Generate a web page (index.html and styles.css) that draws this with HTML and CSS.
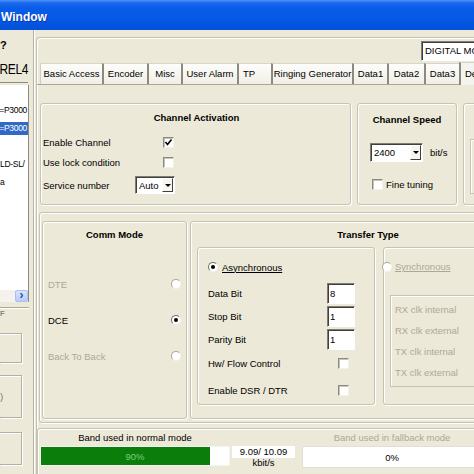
FILE: index.html
```html
<!DOCTYPE html>
<html lang="en">
<head>
  <meta charset="UTF-8">
  <title>Window</title>
  <link rel="stylesheet" href="styles.css">
</head>
<body>
  <div class="titlebar"><span class="title">Window</span></div>

  <div class="app">
    <div class="sidebar">
      <div class="sb-head">
        <div class="sb-icon">?</div>
        <div class="sb-name">REL4</div>
      </div>
      <div class="sb-list">
        <div class="node"><span>=P3000</span></div>
        <div class="node sel"><span>=P3000</span></div>
        <div class="node"></div>
        <div class="node start"><span>LD-SL/</span></div>
        <div class="node start"><span>a</span></div>
      </div>
      <div class="sb-scroll"><div class="scroll-btn">›</div></div>
      <div class="sb-foot">
        <div class="sb-note">F</div>
        <div class="sb-btn b1"></div>
        <div class="sb-btn b2">)</div>
        <div class="sb-btn b3"></div>
      </div>
    </div>

    <div class="split"></div>

    <div class="main">
      <div class="main-top">
        <div class="field digital">DIGITAL MO</div>
      </div>

      <div class="tabs">
        <div class="tab w62">Basic Access</div>
        <div class="tab w45">Encoder</div>
        <div class="tab w34">Misc</div>
        <div class="tab w56">User Alarm</div>
        <div class="tab w34 tp">TP</div>
        <div class="tab w81">Ringing Generator</div>
        <div class="tab w35">Data1</div>
        <div class="tab w37">Data2</div>
        <div class="tab w35">Data3</div>
        <div class="tab active">De</div>
      </div>

      <div class="page">
        <div class="row1">
          <div class="grp activation">
            <div class="gtitle">Channel Activation</div>
            <div class="frow first">
              <span class="lbl w120">Enable Channel</span>
              <span class="chk"><svg width="9" height="9" viewBox="0 0 9 9"><polyline points="1.5,4 3.5,6.5 7.5,1.5" fill="none" stroke="#000" stroke-width="1.6"/></svg></span>
            </div>
            <div class="frow">
              <span class="lbl w120">Use lock condition</span>
              <span class="chk"></span>
            </div>
            <div class="frow svc">
              <span class="lbl w92">Service number</span>
              <div class="combo auto"><span class="val">Auto</span><span class="drop"></span></div>
            </div>
          </div>

          <div class="grp speed">
            <div class="gtitle">Channel Speed</div>
            <div class="speed-row">
              <div class="combo rate"><span class="val">2400</span><span class="drop"></span></div>
              <span class="unit">bit/s</span>
            </div>
            <div class="tune-row">
              <span class="chk"></span>
              <span>Fine tuning</span>
            </div>
          </div>

          <div class="grp third">
            <div class="inner"></div>
          </div>
        </div>

        <div class="grp row2">
          <div class="grp comm">
            <div class="gtitle">Comm Mode</div>
            <div class="opt first dis"><span>DTE</span><span class="radio"></span></div>
            <div class="opt"><span>DCE</span><span class="radio on"></span></div>
            <div class="opt dis"><span>Back To Back</span><span class="radio"></span></div>
          </div>

          <div class="grp transfer">
            <div class="gtitle">Transfer Type</div>
            <div class="tt-body">
              <div class="grp async">
                <div class="mode"><span class="radio on"></span><u>Asynchronous</u></div>
                <div class="nrow first"><span class="lbl w119">Data Bit</span><span class="field num">8</span></div>
                <div class="nrow"><span class="lbl w119">Stop Bit</span><span class="field num">1</span></div>
                <div class="nrow"><span class="lbl w119">Parity Bit</span><span class="field num">1</span></div>
                <div class="crow hw"><span class="lbl w130">Hw/ Flow Control</span><span class="chk"></span></div>
                <div class="crow dsr"><span class="lbl w130">Enable DSR / DTR</span><span class="chk"></span></div>
              </div>
              <div class="grp sync">
                <div class="mode dis"><span class="radio"></span><u>Synchronous</u></div>
                <div class="sync-box">
                  <div>RX clk internal</div>
                  <div>RX clk external</div>
                  <div>TX clk internal</div>
                  <div>TX clk external</div>
                </div>
              </div>
            </div>
          </div>
        </div>
      </div>

      <div class="band">
        <div class="band-normal">
          <div class="band-lbl">Band used in normal mode</div>
          <div class="bar">
            <div class="fill" style="width: 90%"></div>
            <div class="pct">90%</div>
          </div>
        </div>
        <div class="band-rate">
          <div class="rate-val">9.09/ 10.09</div>
          <div class="rate-unit">kbit/s</div>
        </div>
        <div class="band-fallback">
          <div class="band-lbl dis">Band used in fallback mode</div>
          <div class="fb-box">0%</div>
        </div>
      </div>
    </div>
  </div>
</body>
</html>
```

FILE: styles.css
```css
* {
  margin: 0;
  padding: 0;
  box-sizing: border-box;
}

body {
  width: 474px;
  height: 474px;
  overflow: hidden;
  background: #ece9d8;
  font-family: "Liberation Sans", Arial, sans-serif;
  font-size: 9.5px;
  color: #000;
}

/* title bar */
.titlebar {
  height: 30px;
  display: flex;
  align-items: center;
  background: linear-gradient(#4a94f6 0, #1a68ee 3px, #0a5de8 8px, #0558e4 20px, #034fd8 30px);
}

.title {
  color: #fff;
  font-weight: bold;
  font-size: 12px;
  padding: 3px 0 0 1px;
  text-shadow: 1px 1px 0 #0b3aa8;
}

.app {
  display: flex;
  height: 444px;
  overflow: hidden;
}

/* left tree panel */
.sidebar {
  width: 29px;
  flex-shrink: 0;
  display: flex;
  flex-direction: column;
}

.sb-head {
  height: 53px;
  margin-right: 1px;
  padding-top: 9px;
  border-bottom: 1px solid #8f8d80;
}

.sb-icon {
  font-weight: bold;
  font-size: 11px;
  line-height: 12px;
}

.sb-name {
  display: flex;
  justify-content: flex-end;
  white-space: nowrap;
  font-size: 12px;
  letter-spacing: -0.4px;
  line-height: 18px;
  margin-top: 9px;
  transform: scaleY(1.25);
}

.sb-list {
  height: 205px;
  margin-top: 2px;
  background: #fff;
  border-right: 1px solid #8d8c84;
  padding-top: 16px;
  overflow: hidden;
}

.node {
  height: 18px;
  display: flex;
  align-items: center;
  justify-content: flex-end;
  overflow: hidden;
  white-space: nowrap;
  font-size: 8.5px;
  letter-spacing: -0.3px;
}

.node span {
  line-height: 13px;
  padding-right: 1px;
}

.node.sel span {
  background: #316ac5;
  color: #fff;
}

.node.start {
  justify-content: flex-start;
}

.sb-scroll {
  height: 12px;
  display: flex;
  background: #f3f2ec;
  border-right: 1px solid #8d8c84;
}

.scroll-btn {
  width: 13px;
  margin-left: auto;
  background: linear-gradient(#d9e4fd, #b7cbf7);
  border: 1px solid #aac0f0;
  border-radius: 2px;
  color: #2b4c9c;
  font-weight: bold;
  font-size: 12px;
  line-height: 8px;
  text-align: center;
}

.sb-foot {
  margin-top: 5px;
  border-top: 1px solid #aca899;
  box-shadow: inset 0 1px 0 #fff;
  padding-top: 1px;
}

.sb-note {
  font-size: 8px;
  line-height: 10px;
  color: #555;
}

.sb-btn {
  width: 22px;
  border: 1px solid #b2b0a2;
  border-left: none;
  box-shadow: inset 0 1px 0 #fff, 1px 1px 0 #fff;
}

.b1 { height: 30px; margin-top: 14px; }
.b2 { height: 43px; margin-top: 12px; display: flex; align-items: center; color: #777; }
.b3 { height: 33px; margin-top: 14px; }

.split {
  width: 7px;
  flex-shrink: 0;
  background: linear-gradient(to right, transparent 4px, #b5b3a5 4px, #b5b3a5 5px, #fff 5px, #fff 6px, transparent 6px);
}

/* main frame */
.main {
  width: 438px;
  flex-shrink: 0;
  margin-top: 7px;
  border-left: 1px solid #c3c0ae;
  border-top: 1px solid #c3c0ae;
  border-top-left-radius: 4px;
  box-shadow: inset 1px 1px 0 #fff;
  display: flex;
  flex-direction: column;
}

.main-top {
  height: 24px;
  display: flex;
  align-items: flex-end;
  padding-bottom: 1px;
}

.field {
  background: #fff;
  border: 1px solid;
  border-color: #7f7d70 #fff #fff #7f7d70;
  box-shadow: inset 1px 1px 0 #3f3f3f;
}

.digital {
  margin-left: auto;
  width: 53px;
  height: 20px;
  border-right: none;
  padding-left: 3px;
  line-height: 18px;
  white-space: nowrap;
  overflow: hidden;
}

/* tabs */
.tabs {
  height: 22px;
  display: flex;
  align-items: flex-end;
  padding-left: 3px;
}

.tab {
  height: 21px;
  flex-shrink: 0;
  line-height: 20px;
  text-align: center;
  white-space: nowrap;
  background: linear-gradient(#fdfdfb, #f0eee6);
  border-top: 1px solid #d8d6c8;
  border-left: 2px solid #8c8a7e;
}

.tab:first-child { border-left: 1px solid #d0cebf; }
.tab.tp { text-align: left; padding-left: 4px; }

.tab.active {
  height: 23px;
  width: 40px;
  margin-bottom: -1px;
  position: relative;
  background: #f4f3ee;
  text-align: left;
  padding-left: 4px;
  line-height: 21px;
}

.w34 { width: 34px; }
.w35 { width: 35px; }
.w37 { width: 37px; }
.w45 { width: 45px; }
.w56 { width: 56px; }
.w62 { width: 62px; }
.w81 { width: 81px; }

.page {
  height: 340px;
  border-top: 1px solid #a9a797;
  padding: 18px 0 0 3px;
}

/* group boxes */
.grp {
  flex-shrink: 0;
  border: 1px solid #c6c3b2;
  border-radius: 3px;
  box-shadow: inset 1px 1px 0 #fff, 1px 1px 0 #fff;
}

.gtitle {
  font-weight: bold;
  font-size: 9.5px;
  line-height: 14px;
  text-align: center;
}

.row1 {
  display: flex;
  gap: 6px;
  height: 102px;
}

.activation {
  width: 311px;
  padding: 7px 0 0 2px;
}

.frow {
  display: flex;
  align-items: center;
  height: 20px;
}

.frow.first { margin-top: 7px; }
.frow.svc { margin-top: 3px; }

.lbl { flex-shrink: 0; white-space: nowrap; }
.w92 { width: 92px; }
.w119 { width: 119px; }
.w120 { width: 120px; }
.w130 { width: 130px; }

.chk {
  width: 11px;
  height: 11px;
  flex-shrink: 0;
  display: flex;
  align-items: center;
  justify-content: center;
  background: #fff;
  border: 1px solid;
  border-color: #8b8b80 #f2f1ea #f2f1ea #8b8b80;
  box-shadow: inset 1px 1px 0 #c4c3b8;
}

.combo {
  display: flex;
  background: #fff;
  border: 1px solid;
  border-color: #7f7d70 #fff #fff #7f7d70;
  box-shadow: inset 1px 1px 0 #3f3f3f;
  padding: 1px 1px 1px 2px;
}

.combo .val {
  flex: 1;
  padding-left: 1px;
  line-height: 15px;
}

.combo .drop {
  width: 11px;
  display: flex;
  align-items: center;
  justify-content: center;
  background: #f6f5f0;
  border: 1px solid;
  border-color: #fff #404040 #404040 #fff;
}

.combo .drop::after {
  content: "";
  border-left: 3px solid transparent;
  border-right: 3px solid transparent;
  border-top: 3px solid #000;
}

.auto { width: 40px; height: 18px; }
.rate { width: 53px; height: 19px; }

.speed {
  width: 100px;
  padding-top: 9px;
}

.speed-row {
  display: flex;
  align-items: center;
  margin-top: 16px;
  padding-left: 12px;
}

.unit { margin-left: 7px; }

.tune-row {
  display: flex;
  align-items: center;
  gap: 3px;
  height: 12px;
  margin-top: 16px;
  padding-left: 14px;
}

.third {
  width: 40px;
  padding: 35px 0 0 6px;
}

.third .inner {
  height: 55px;
  border: 1px solid #c6c3b2;
  border-right: none;
  box-shadow: inset 1px 1px 0 #fff;
}

/* comm / transfer */
.row2 {
  width: 520px;
  height: 211px;
  margin: 7px 0 0 -1px;
  display: flex;
  padding: 8px 0 3px 2px;
}

.comm {
  width: 145px;
  height: 198px;
  margin-right: 3px;
  padding: 6px 5px 0 5px;
}

.opt {
  display: flex;
  justify-content: space-between;
  align-items: center;
  height: 36px;
}

.opt.first { margin-top: 24px; }

.dis { color: #aca899; }

.radio {
  width: 10px;
  height: 10px;
  flex-shrink: 0;
  border-radius: 50%;
  display: flex;
  align-items: center;
  justify-content: center;
  background: #fff;
  border: 1px solid;
  border-color: #6f6e66 #f4f3ee #f4f3ee #6f6e66;
}

.dis .radio { border-color: #a9a79b #f4f3ee #f4f3ee #a9a79b; }

.radio.on::after {
  content: "";
  width: 4px;
  height: 4px;
  border-radius: 50%;
  background: #000;
}

.transfer {
  width: 356px;
  height: 198px;
  padding: 6px 6px 0 6px;
}

.tt-body {
  display: flex;
  gap: 8px;
  margin-top: 5px;
}

.async {
  width: 178px;
  height: 158px;
  padding: 12px 0 0 10px;
}

.mode {
  display: flex;
  align-items: center;
  gap: 4px;
  height: 14px;
}

.nrow {
  display: flex;
  align-items: center;
  height: 21px;
  margin-top: 2px;
}

.nrow.first { margin-top: 9px; }

.num {
  width: 28px;
  height: 21px;
  padding-left: 2px;
  line-height: 19px;
}

.crow {
  display: flex;
  align-items: center;
  height: 20px;
}

.crow.hw { margin-top: 3px; }
.crow.dsr { margin-top: 7px; }

.sync {
  width: 160px;
  height: 158px;
  padding-top: 12px;
  color: #aca899;
}

.sync .mode {
  margin-left: -2px;
  gap: 3px;
  height: 13px;
}

.sync-box {
  height: 92px;
  margin: 22px 0 0 6px;
  padding: 3px 0 0 4px;
  border: 1px solid #c6c3b2;
  border-right: none;
  box-shadow: inset 1px 1px 0 #fff;
  line-height: 21px;
}

/* bandwidth strip */
.band {
  flex: 1;
  margin-top: 4px;
  display: flex;
  padding: 2px 0 0 2px;
  border-top: 1px solid #c6c3b2;
  border-left: 1px solid #c6c3b2;
  border-top-left-radius: 3px;
  box-shadow: inset 1px 1px 0 #fff;
}

.band-normal { width: 190px; flex-shrink: 0; }

.band-lbl {
  line-height: 14px;
  text-align: center;
  white-space: nowrap;
}

.bar {
  height: 20px;
  margin-top: 1px;
  display: grid;
  background: #fff;
  border: 1px solid #f4f3ee;
}

.fill {
  grid-area: 1 / 1;
  background: #0b7d0b;
}

.pct {
  grid-area: 1 / 1;
  align-self: center;
  text-align: center;
  color: #7bcf7b;
}

.band-rate {
  width: 63px;
  flex-shrink: 0;
  margin: 15px 0 0 2px;
  text-align: center;
}

.rate-val {
  height: 12px;
  line-height: 12px;
  background: #fff;
}

.rate-unit { line-height: 10px; }

.band-fallback {
  width: 180px;
  flex-shrink: 0;
  margin-left: 7px;
}

.fb-box {
  height: 22px;
  margin-top: 1px;
  line-height: 22px;
  text-align: center;
  background: #fff;
  border: 1px solid #e2e0d4;
}
```
